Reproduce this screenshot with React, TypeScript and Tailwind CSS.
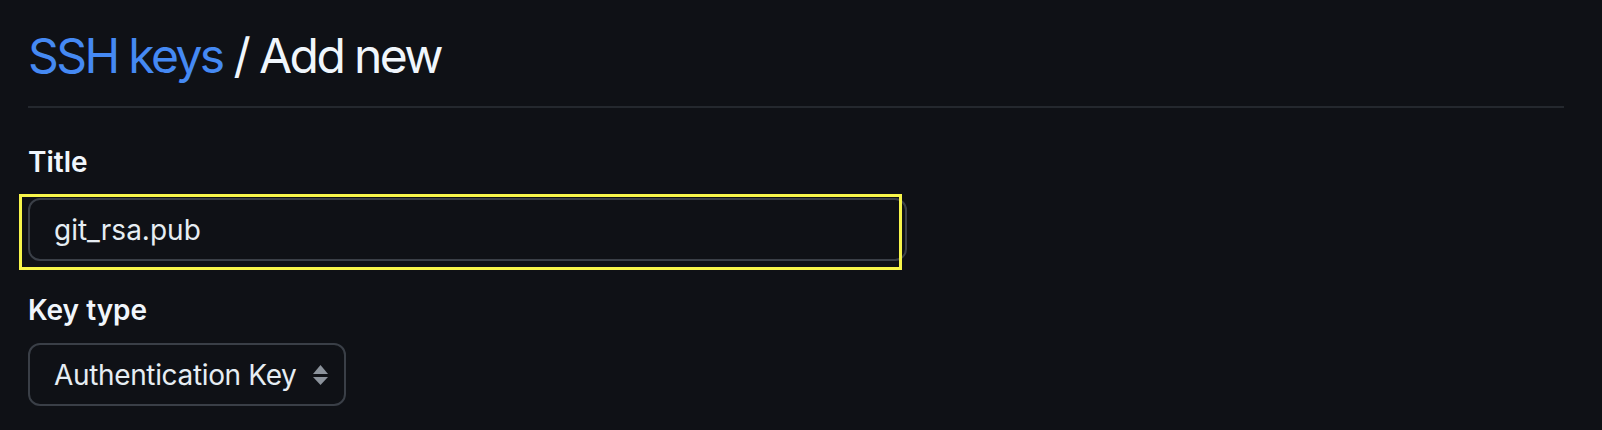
// SSH key form — "Add new" screen, dark theme
export default function App() {
  return (
    <main
      className="min-h-[430px] w-full bg-[#0f1116] pl-[28px] pr-[38px] pt-[26px] text-[#f0f6fc]"
      style={{ fontFamily: 'Inter, "Noto Sans", "Liberation Sans", sans-serif' }}
    >
      <h1 className="pb-[20px] text-[48px] leading-[60px] font-normal tracking-[-2.6px]">
        <a href="#" className="text-[#4589f3]">SSH keys</a>
        <span> / Add new</span>
      </h1>
      <div className="h-[2px] w-full bg-[#24282e]" />

      <form className="pt-[38px]">
        <label className="block text-[28px] leading-[32px] font-semibold">Title</label>
        <div className="relative mt-[20px] w-[879px]">
          <input
            defaultValue="git_rsa.pub"
            className="h-[63px] w-full rounded-[12px] border-2 border-[#3a3f47] bg-[#0f1116] px-[24px] text-[28px] text-[#e6edf3] outline-none"
          />
          {/* highlight marker over the field */}
          <div className="pointer-events-none absolute left-[-9px] top-[-4px] h-[76px] w-[883px] border-[3px] border-[#f7f54a]" />
        </div>

        <label className="mt-[33px] block text-[28px] leading-[32px] font-semibold">Key type</label>
        <div className="mt-[17px] flex h-[63px] w-[318px] items-center justify-between rounded-[12px] border-2 border-[#3a3f47] pl-[24px] pr-[16px] text-[28px] tracking-[-0.35px] text-[#e6edf3]">
          <span>Authentication Key</span>
          <svg width="15" height="20" viewBox="0 0 15 20" className="text-[#8b929b]">
            <path d="M7.5 0 L15 9 H0 Z" fill="currentColor" />
            <path d="M0 12 H15 L7.5 20 Z" fill="currentColor" />
          </svg>
        </div>
      </form>
    </main>
  );
}
